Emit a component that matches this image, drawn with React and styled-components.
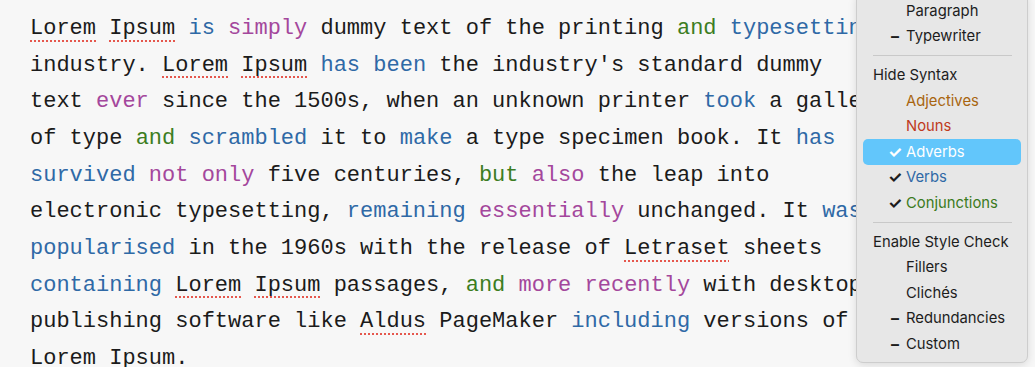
import styled, { createGlobalStyle } from "styled-components";

//GLOBAL
const GlobalStyle = createGlobalStyle`
  html, body {
    margin: 0;
    padding: 0;
    background: #f7f7f7;
    overflow: hidden;
  }
`;

//CSS
const Page = styled.div`
  position: relative;
  width: 1035px;
  height: 367px;
  overflow: hidden;
  background: #f7f7f7;
`;

const Editor = styled.div`
  padding: 11px 0 0 30px;
  font-family: "Liberation Mono", "DejaVu Sans Mono", monospace;
  font-size: 22px;
  line-height: 36.67px;
  color: #1b1b1b;
`;

const Line = styled.div`
  white-space: pre;
`;

const colors = {
  b: "#2f69a6",
  p: "#a4479c",
  g: "#3c7d22",
};

const Word = styled.span`
  color: ${(p) => colors[p.$kind] || "inherit"};
`;

const Misspelled = styled.span`
  text-decoration: underline dotted #e5574d;
  text-decoration-thickness: 2px;
  text-underline-offset: 6px;
`;

const Menu = styled.div`
  position: absolute;
  top: -8px;
  left: 856px;
  width: 172px;
  padding: 5px 0 5px;
  box-sizing: border-box;
  background: #e7e7e7;
  border: 1px solid #cdcdcd;
  border-radius: 7px;
  box-shadow: 0 2px 8px rgba(0, 0, 0, 0.12);
  font-family: "Inter", "Liberation Sans", sans-serif;
  font-size: 14.8px;
  color: #1d1d1d;
`;

const Item = styled.div`
  display: flex;
  align-items: center;
  height: 25.6px;
  margin: 0 6px;
  padding-left: ${(p) => (p.$indent ? "43px" : "10px")};
  border-radius: 5px;
  position: relative;
  color: ${(p) => (p.$active ? "#ffffff" : p.$color || "inherit")};
  background: ${(p) => (p.$active ? "#62c6fb" : "transparent")};
`;

const Mark = styled.span`
  position: absolute;
  left: 25px;
  width: 14px;
  text-align: center;
  font-size: 16px;
  font-weight: 700;
  color: ${(p) => (p.$active ? "#ffffff" : "#1d1d1d")};
`;

const Separator = styled.div`
  height: 1px;
  margin: 6px 15px 6px 16px;
  background: #c9c9c9;
`;

//DATA
const text = [
  "[s|Lorem] [s|Ipsum] [b|is] [p|simply] dummy text of the printing [g|and] [b|typesetting]",
  "industry. [s|Lorem] [s|Ipsum] [b|has been] the industry's standard dummy",
  "text [p|ever] since the 1500s, when an unknown printer [b|took] a galley",
  "of type [g|and] [b|scrambled] it to [b|make] a type specimen book. It [b|has]",
  "[b|survived] [p|not only] five centuries, [g|but] [p|also] the leap into",
  "electronic typesetting, [b|remaining] [p|essentially] unchanged. It [b|was]",
  "[b|popularised] in the 1960s with the release of [s|Letraset] sheets",
  "[b|containing] [s|Lorem] [s|Ipsum] passages, [g|and] [p|more recently] with desktop",
  "publishing software like [s|Aldus] PageMaker [b|including] versions of",
  "[s|Lorem] [s|Ipsum].",
];

const menu = [
  { label: "Paragraph", indent: true },
  { label: "Typewriter", indent: true, mark: "–" },
  { sep: true },
  { label: "Hide Syntax" },
  { label: "Adjectives", indent: true, color: "#a8650f" },
  { label: "Nouns", indent: true, color: "#bf3a1c" },
  { label: "Adverbs", indent: true, mark: "✓", active: true },
  { label: "Verbs", indent: true, mark: "✓", color: "#2f69a6" },
  { label: "Conjunctions", indent: true, mark: "✓", color: "#3a7a20" },
  { sep: true },
  { label: "Enable Style Check" },
  { label: "Fillers", indent: true },
  { label: "Clichés", indent: true },
  { label: "Redundancies", indent: true, mark: "–" },
  { label: "Custom", indent: true, mark: "–" },
];

const renderLine = (line) =>
  line.split(/(\[[a-z]\|[^\]]+\])/).map((part, i) => {
    const m = part.match(/^\[([a-z])\|([^\]]+)\]$/);
    if (!m) return part;
    if (m[1] === "s") return <Misspelled key={i}>{m[2]}</Misspelled>;
    return (
      <Word key={i} $kind={m[1]}>
        {m[2]}
      </Word>
    );
  });

//PAGE
const App = () => {
  return (
    <Page>
      <GlobalStyle />
      <Editor>
        {text.map((line, i) => (
          <Line key={i}>{renderLine(line)}</Line>
        ))}
      </Editor>
      <Menu>
        {menu.map((item, i) =>
          item.sep ? (
            <Separator key={i} />
          ) : (
            <Item
              key={i}
              $indent={item.indent}
              $color={item.color}
              $active={item.active}
            >
              {item.mark && <Mark $active={item.active}>{item.mark}</Mark>}
              {item.label}
            </Item>
          )
        )}
      </Menu>
    </Page>
  );
};

export default App;
